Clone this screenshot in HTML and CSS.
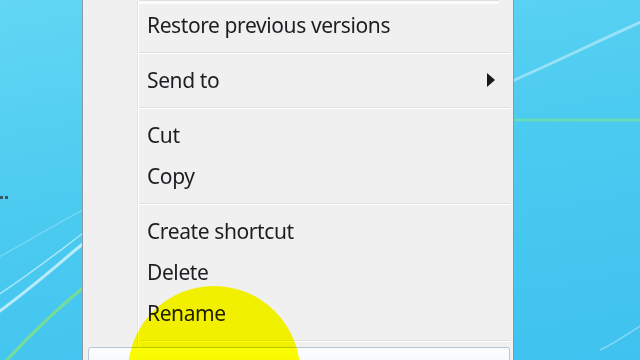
FILE: index.html
```html
<!DOCTYPE html>
<html lang="en">
  <head>
    <meta charset="UTF-8">
    <meta name="viewport" content="width=device-width, initial-scale=1.0">
    <title>Context Menu</title>
    <link rel="stylesheet" href="styles.css">
  </head>

  <body>
    <div class="desktop">
      <svg class="wallpaper" width="640" height="360" viewBox="0 0 640 360">
        <path d="M-10 318 C 30 290, 60 262, 90 238" stroke="#e8fbff" stroke-width="3" fill="none" opacity="0.7"/>
        <path d="M-10 300 C 30 275, 60 250, 90 228" stroke="#e8fbff" stroke-width="1.5" fill="none" opacity="0.6"/>
        <path d="M-10 262 C 30 240, 60 222, 90 206" stroke="#e8fbff" stroke-width="1" fill="none" opacity="0.4"/>
        <path d="M5 362 C 30 335, 55 310, 90 282" stroke="#7ee08a" stroke-width="3" fill="none" opacity="0.85"/>
        <path d="M510 82 C 560 60, 600 40, 650 18" stroke="#e8fbff" stroke-width="3" fill="none" opacity="0.45"/>
        <path d="M510 120 L 650 120" stroke="#6fe0a0" stroke-width="2.5" fill="none" opacity="0.8"/>
        <path d="M600 350 C 620 340, 630 332, 650 320" stroke="#e8fbff" stroke-width="1.5" fill="none" opacity="0.4"/>
        <rect x="0" y="196" width="3" height="3" fill="#3a5866"/>
        <rect x="5" y="196" width="3" height="3" fill="#3a5866"/>
      </svg>

      <div class="menu">
        <div class="menu-edge"></div>
        <div class="menu-item">Restore previous versions</div>
        <div class="menu-sep"></div>
        <div class="menu-item has-sub">
          Send to
          <span class="sub-arrow"></span>
        </div>
        <div class="menu-sep"></div>
        <div class="menu-item">Cut</div>
        <div class="menu-item">Copy</div>
        <div class="menu-sep"></div>
        <div class="menu-item">Create shortcut</div>
        <div class="menu-item">Delete</div>
        <div class="menu-item">Rename</div>
        <div class="menu-sep"></div>
        <div class="menu-item hover">Properties</div>
      </div>

      <div class="cursor-spot"></div>
    </div>
  </body>
</html>
```

FILE: styles.css
```css
html,
body {
  margin: 0;
  padding: 0;
  width: 640px;
  height: 360px;
  overflow: hidden;
}

.desktop {
  position: relative;
  width: 640px;
  height: 360px;
  display: flex;
  align-items: flex-start;
  background: linear-gradient(170deg, #62d6f4 0%, #4ccbf0 45%, #3fc2ef 100%);
  font-family: "Noto Sans", "Open Sans", sans-serif;
}

.wallpaper {
  position: absolute;
  left: 0;
  top: 0;
}

.menu {
  position: relative;
  margin-left: 82px;
  width: 430px;
  height: 400px;
  background:
    linear-gradient(to right, transparent 54px, #e2e3e3 54px, #e2e3e3 55px, #ffffff 55px, #ffffff 56px, transparent 56px),
    #f0f0f0;
  border-left: 1px solid #8c9aa3;
  border-right: 1px solid #8c9aa3;
}

.menu-edge {
  height: 3px;
  margin-left: 56px;
  margin-right: 14px;
  border-top: 1px solid #e0e0e0;
  background-color: #fbfbfb;
}

.menu-item {
  display: flex;
  align-items: center;
  height: 41px;
  padding-left: 64px;
  padding-right: 18px;
  font-size: 21px;
  letter-spacing: -0.4px;
  color: #1f1d22;
}

.menu-item.has-sub {
  justify-content: space-between;
}

.sub-arrow {
  width: 0;
  height: 0;
  border-top: 7px solid transparent;
  border-bottom: 7px solid transparent;
  border-left: 8px solid #1a1a1a;
}

.menu-sep {
  height: 14px;
  margin-left: 56px;
  margin-right: 3px;
  box-sizing: border-box;
  padding-top: 7px;
}

.menu-sep::before {
  content: "";
  display: block;
  height: 1px;
  background-color: #e0e0e0;
  border-bottom: 1px solid #ffffff;
}

.menu-item.hover {
  margin-left: 5px;
  margin-right: 3px;
  padding-left: 58px;
  border: 1px solid #b9c6d2;
  border-radius: 3px;
  background: linear-gradient(#fcfdfe, #eef2f6);
}

.cursor-spot {
  position: absolute;
  left: 128px;
  top: 286px;
  width: 172px;
  height: 172px;
  border-radius: 50%;
  background: radial-gradient(circle, #ffff00 0%, #ffff00 88%, rgba(255, 255, 0, 0) 100%);
  mix-blend-mode: multiply;
}
```
